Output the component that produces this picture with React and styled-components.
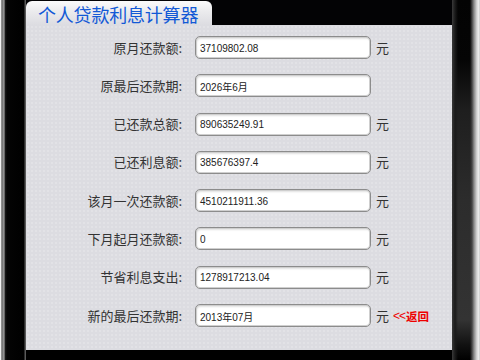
import React from "react";
import styled, { createGlobalStyle } from "styled-components";

const Global = createGlobalStyle`
  html, body { margin: 0; padding: 0; background: #000; }
  body { width: 480px; height: 360px; overflow: hidden; font-family: "Noto Sans CJK SC", "Liberation Sans", sans-serif; }
`;

const Device = styled.div`
  display: flex;
  width: 480px;
  height: 360px;
  background: #000;
`;

const LeftBezel = styled.div`
  width: 26px;
  flex: none;
  background: linear-gradient(to right, #f2f2f2 0, #f2f2f2 1px, #9a9a9a 1px, #6d6d6d 3px, #b5b5b5 4px, #1a1a1a 5px, #040404 7px, #000 24px, #5a5a5a 25px, #5a5a5a 26px);
`;

const RightBezel = styled.div`
  width: 28px;
  flex: none;
  position: relative;
  background:
    linear-gradient(to right, #3a3a3a 0, #1a1a1a 3px, rgba(0,0,0,0) 6px, rgba(0,0,0,0) 18px, #444 20px, #8a8a8a 22px, #d8d8d8 25px, #f0f0f0 27px, #bbb 28px),
    linear-gradient(to bottom, #030303 0, #050505 60px, #1e1e1e 110px, #2c2c2c 200px, #333 320px, #111 345px, #000 360px);
`;

const Main = styled.div`
  width: 426px;
  flex: none;
  display: flex;
  flex-direction: column;
`;

const TabBar = styled.div`
  height: 25px;
  display: flex;
  align-items: flex-end;
  background: #030305;
`;

const Tab = styled.div`
  width: 186px;
  height: 24px;
  box-sizing: border-box;
  padding: 3px 0 0 12px;
  border-radius: 6px 6px 0 0;
  background: linear-gradient(to bottom, #fbfbfb 0, #ececee 40%, #dcdce1 100%);
  font-family: "Noto Sans CJK SC", sans-serif;
  font-size: 18px;
  line-height: 20px;
  color: #1259d6;
  letter-spacing: -0.2px;
  white-space: nowrap;
`;

const Panel = styled.div`
  height: 325px;
  box-sizing: border-box;
  padding-top: 11px;
  display: flex;
  flex-direction: column;
  gap: 15.3px;
  background-color: #dcdce1;
  background-image: radial-gradient(rgba(255,255,255,0.35) 0.6px, transparent 0.8px);
  background-size: 4px 4px;
`;

const Row = styled.div`
  height: 23px;
  display: flex;
  align-items: center;
`;

const Label = styled.div`
  width: 156px;
  flex: none;
  text-align: right;
  font-size: 13px;
  line-height: 16px;
  color: #333;
  white-space: nowrap;
`;

const Field = styled.div`
  margin-left: 13px;
  width: 176px;
  height: 23px;
  box-sizing: border-box;
  flex: none;
  display: flex;
  align-items: center;
  padding: 1px 0 0 4px;
  border: 1px solid #8c8c8c;
  border-radius: 5px;
  background: #fff;
  box-shadow: inset 0 0 0 1px #cfcfcf, inset 1px 2px 2px rgba(0,0,0,0.12);
  font-family: "Liberation Sans", "Noto Sans CJK SC", sans-serif;
  font-size: 10px;
  color: #222;
  white-space: nowrap;
`;

const Unit = styled.span`
  margin-left: 5px;
  font-size: 13px;
  line-height: 16px;
  color: #333;
`;

const Back = styled.a`
  margin-left: 4px;
  display: flex;
  align-items: center;
  color: #ee0000;
  text-decoration: none;
  font-weight: 700;
  white-space: nowrap;
`;

const Arrows = styled.span`
  font-family: "Liberation Sans", sans-serif;
  font-size: 12px;
  font-weight: 400;
  letter-spacing: -1px;
  margin-right: 1px;
`;

const BackText = styled.span`
  font-size: 11.5px;
  line-height: 14px;
`;

const Bottom = styled.div`
  flex: 1;
  background: #000;
`;

const rows = [
  { label: "原月还款额:", value: "37109802.08", unit: true },
  { label: "原最后还款期:", value: "2026年6月" },
  { label: "已还款总额:", value: "890635249.91", unit: true },
  { label: "已还利息额:", value: "385676397.4", unit: true },
  { label: "该月一次还款额:", value: "4510211911.36", unit: true },
  { label: "下月起月还款额:", value: "0", unit: true },
  { label: "节省利息支出:", value: "1278917213.04", unit: true },
  { label: "新的最后还款期:", value: "2013年07月", unit: true, back: true },
];

export default function App() {
  return (
    <>
      <Global />
      <Device>
        <LeftBezel />
        <Main>
          <TabBar>
            <Tab>个人贷款利息计算器</Tab>
          </TabBar>
          <Panel>
            {rows.map((r) => (
              <Row key={r.label}>
                <Label>{r.label}</Label>
                <Field>{r.value}</Field>
                {r.unit && <Unit>元</Unit>}
                {r.back && (
                  <Back href="#">
                    <Arrows>&lt;&lt;</Arrows>
                    <BackText>返回</BackText>
                  </Back>
                )}
              </Row>
            ))}
          </Panel>
          <Bottom />
        </Main>
        <RightBezel />
      </Device>
    </>
  );
}
